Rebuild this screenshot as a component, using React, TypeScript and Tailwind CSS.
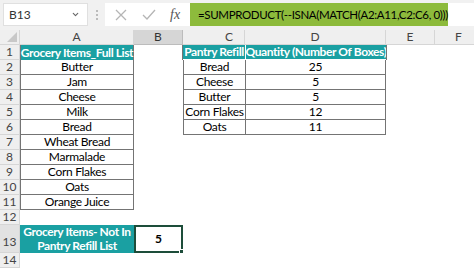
import { ChevronDown } from "lucide-react";

const groceries = [
  "Butter",
  "Jam",
  "Cheese",
  "Milk",
  "Bread",
  "Wheat Bread",
  "Marmalade",
  "Corn Flakes",
  "Oats",
  "Orange Juice",
];

const pantry: [string, string][] = [
  ["Bread", "25"],
  ["Cheese", "5"],
  ["Butter", "5"],
  ["Corn Flakes", "12"],
  ["Oats", "11"],
];

const font = { fontFamily: "Lato, 'Open Sans', sans-serif" };

function RowHead({ n, tall }: { n: number; tall?: boolean }) {
  return (
    <div
      className={`flex justify-center border-r border-b border-[#d6d6d6] text-[12px] text-[#444] ${
        tall ? "items-end bg-[#e2e2e2] pb-[1px]" : "items-center bg-[#efefef]"
      }`}
    >
      {n}
    </div>
  );
}

export default function App() {
  const cols = "grid-cols-[20px_114px_49px_62px_141px_49px_1fr]";
  const cell =
    "flex items-center justify-center whitespace-nowrap text-[12px] tracking-[-0.3px] text-black";
  const tableBorder = "border-[#747474]";
  const teal = "bg-[#1aa0a2] text-white font-bold tracking-[-0.4px]";

  return (
    <div className="h-[268px] w-[474px] overflow-hidden bg-white" style={font}>
      {/* formula bar */}
      <div className="flex h-[30px] items-start bg-[#f1f1f1] pt-[3px]">
        <div className="ml-[3px] flex h-[23px] w-[85px] items-center justify-between border border-[#e0e0e0] bg-white pl-[5px] pr-[7px] text-[12px] text-[#333]">
          B13
          <ChevronDown className="h-[9px] w-[9px] text-[#666]" strokeWidth={3} />
        </div>
        <div className="flex h-[23px] w-[17px] flex-col items-center justify-center gap-[2px]">
          <span className="h-[2px] w-[2px] bg-[#bbb]" />
          <span className="h-[2px] w-[2px] bg-[#bbb]" />
          <span className="h-[2px] w-[2px] bg-[#bbb]" />
        </div>
        <div className="flex h-[23px] flex-1 items-center bg-white">
          <div className="flex w-[85px] items-center">
            <svg width="12" height="12" viewBox="0 0 12 12" className="ml-[10px]">
              <path d="M1 1 L11 11 M11 1 L1 11" stroke="#b5b5b5" strokeWidth="1.3" />
            </svg>
            <svg width="14" height="12" viewBox="0 0 14 12" className="ml-[15px]">
              <path d="M1 6 L5 10 L13 1" stroke="#b5b5b5" strokeWidth="1.3" fill="none" />
            </svg>
            <span
              className="ml-[14px] text-[14px] italic text-[#555]"
              style={{ fontFamily: "'Liberation Serif', serif" }}
            >
              fx
            </span>
          </div>
          <div className="flex h-[23px] w-[258px] items-center whitespace-nowrap bg-[#8dbb3c] pl-[8px] text-[11.5px] tracking-[-0.35px] text-black">
            =SUMPRODUCT(--ISNA(MATCH(A2:A11,C2:C6, 0)))
          </div>
        </div>
      </div>

      {/* grid */}
      <div className={`grid ${cols} grid-rows-[15px_repeat(12,15px)_28px_15px]`}>
        {/* column headers */}
        <div className="relative border-r border-b border-[#d6d6d6] bg-[#efefef]">
          <svg width="10" height="10" viewBox="0 0 10 10" className="absolute right-[2px] bottom-[2px]">
            <path d="M10 0 L10 10 L0 10 Z" fill="#c8c8c8" />
          </svg>
        </div>
        <div className="flex items-center justify-center border-r border-b border-[#d6d6d6] bg-[#efefef] text-[12px] text-[#444]">A</div>
        <div className="flex items-center justify-center border-r border-b border-[#bcbcbc] bg-[#d6d6d6] text-[12px] text-[#333]">B</div>
        <div className="flex items-center justify-end border-r border-b border-[#d6d6d6] bg-[#efefef] pr-[11px] text-[12px] text-[#444]">C</div>
        <div className="flex items-center justify-center border-r border-b border-[#d6d6d6] bg-[#efefef] text-[12px] text-[#444]">D</div>
        <div className="flex items-center justify-center border-r border-b border-[#d6d6d6] bg-[#efefef] text-[12px] text-[#444]">E</div>
        <div className="flex items-center justify-start border-b border-[#d6d6d6] bg-[#efefef] pl-[20px] text-[12px] text-[#444]">F</div>

        {/* row 1 */}
        <RowHead n={1} />
        <div className={`${cell} ${teal} border-x ${tableBorder}`}>Grocery Items_Full List</div>
        <div className={`border-r ${tableBorder}`} />
        <div className={`${cell} ${teal} border-b border-white`}>Pantry Refill</div>
        <div className={`${cell} ${teal} border-l border-b border-white`}>Quantity (Number Of Boxes)</div>
        <div className={`border-l ${tableBorder}`} />
        <div />

        {/* rows 2-11 */}
        {groceries.map((g, i) => {
          const p = pantry[i];
          return [
            <RowHead key={`h${i}`} n={i + 2} />,
            <div key={`a${i}`} className={`${cell} border-x border-b ${tableBorder}`}>
              {g}
            </div>,
            <div key={`b${i}`} />,
            p ? (
              <div key={`c${i}`} className={`${cell} border-l border-b ${tableBorder}`}>
                {p[0]}
              </div>
            ) : (
              <div key={`c${i}`} />
            ),
            p ? (
              <div key={`d${i}`} className={`${cell} border-x border-b ${tableBorder}`}>
                {p[1]}
              </div>
            ) : (
              <div key={`d${i}`} />
            ),
            <div key={`e${i}`} />,
            <div key={`f${i}`} />,
          ];
        })}

        {/* row 12 */}
        <RowHead n={12} />
        <div />
        <div />
        <div />
        <div />
        <div />
        <div />

        {/* row 13 */}
        <RowHead n={13} tall />
        <div className={`flex flex-col items-center justify-center whitespace-nowrap text-[12px] leading-[14px] ${teal}`}>
          <span>Grocery Items- Not In</span>
          <span>Pantry Refill List</span>
        </div>
        <div className="relative flex items-center justify-center border-2 border-[#1d4d3a] text-[12px] font-bold text-black">
          5
          <span className="absolute -right-[3px] -bottom-[3px] h-[5px] w-[5px] border border-white bg-[#1d4d3a]" />
        </div>
        <div />
        <div />
        <div />
        <div />

        {/* row 14 */}
        <RowHead n={14} />
        <div />
        <div />
        <div />
        <div />
        <div />
        <div />
      </div>
    </div>
  );
}
